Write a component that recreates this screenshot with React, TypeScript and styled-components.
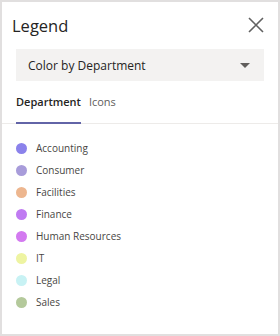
import { FC } from 'react';
import styled, { createGlobalStyle } from 'styled-components';

const GlobalStyle = createGlobalStyle`
    html, body {
        margin: 0;
        padding: 0;
        background: #e1dfdf;
    }
    body {
        font-family: "Open Sans", "Noto Sans", sans-serif;
    }
`;

const Panel = styled.div`
    box-sizing: border-box;
    width: 276px;
    height: 332px;
    margin: 2px;
    background: #ffffff;
    display: flex;
    flex-direction: column;
`;

const Header = styled.div`
    display: flex;
    align-items: center;
    justify-content: space-between;
    padding: 6px 13px 0 10px;
    height: 34px;
`;

const Title = styled.h1`
    margin: 0;
    font-size: 16.5px;
    font-weight: 400;
    color: #252423;
`;

const CloseButton = styled.button`
    border: none;
    background: none;
    padding: 0;
    width: 18px;
    height: 18px;
    display: flex;
    align-items: center;
    justify-content: center;
`;

const Select = styled.div`
    margin: 7px 14px 0 14px;
    height: 32px;
    background: #f3f2f1;
    display: flex;
    align-items: center;
    justify-content: space-between;
    padding: 0 14px 0 12px;
    font-size: 12px;
    color: #252423;
`;

const Caret = styled.div`
    width: 0;
    height: 0;
    border-left: 5px solid transparent;
    border-right: 5px solid transparent;
    border-top: 5px solid #605e5c;
`;

const Tabs = styled.div`
    display: flex;
    gap: 8px;
    margin-top: 9px;
    padding: 0 14px;
    border-bottom: 1px solid #edebe9;
`;

const Tab = styled.div<{ $active?: boolean }>`
    font-size: 11px;
    line-height: 16px;
    font-weight: ${p => (p.$active ? 600 : 400)};
    color: ${p => (p.$active ? '#252423' : '#605e5c')};
    padding: 4px 0 12px;
    border-bottom: 2px solid ${p => (p.$active ? '#6264a7' : 'transparent')};
    margin-bottom: -1px;
`;

const List = styled.ul`
    list-style: none;
    margin: 0;
    padding: 13px 14px 0;
    display: flex;
    flex-direction: column;
`;

const Item = styled.li`
    display: flex;
    align-items: center;
    gap: 9px;
    height: 22px;
    font-size: 10px;
    color: #484644;
`;

const Dot = styled.span<{ $color: string }>`
    width: 11px;
    height: 11px;
    border-radius: 50%;
    background: ${p => p.$color};
    flex-shrink: 0;
`;

const items = [
    { name: 'Accounting', color: '#8b82eb' },
    { name: 'Consumer', color: '#a89cda' },
    { name: 'Facilities', color: '#edb68f' },
    { name: 'Finance', color: '#c07bf2' },
    { name: 'Human Resources', color: '#d37af0' },
    { name: 'IT', color: '#eef4a2' },
    { name: 'Legal', color: '#c8f2f4' },
    { name: 'Sales', color: '#b4c99b' },
];

const App: FC = () => {
    return (
        <>
            <GlobalStyle />
            <Panel>
                <Header>
                    <Title>Legend</Title>
                    <CloseButton aria-label="Close">
                        <svg width="16" height="16" viewBox="0 0 16 16">
                            <path d="M1 1 L15 15 M15 1 L1 15" stroke="#616161" strokeWidth="1.6" />
                        </svg>
                    </CloseButton>
                </Header>
                <Select>
                    <span>Color by Department</span>
                    <Caret />
                </Select>
                <Tabs>
                    <Tab $active>Department</Tab>
                    <Tab>Icons</Tab>
                </Tabs>
                <List>
                    {items.map(i => (
                        <Item key={i.name}>
                            <Dot $color={i.color} />
                            {i.name}
                        </Item>
                    ))}
                </List>
            </Panel>
        </>
    );
};

export default App;
